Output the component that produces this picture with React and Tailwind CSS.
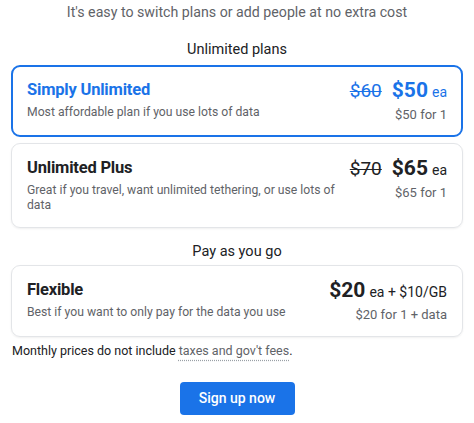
const plans = [
  {
    name: "Simply Unlimited",
    desc: "Most affordable plan if you use lots of data",
    oldPrice: "$60",
    price: "$50",
    unit: "ea",
    note: "$50 for 1",
    selected: true,
  },
  {
    name: "Unlimited Plus",
    desc: "Great if you travel, want unlimited tethering, or use lots of data",
    oldPrice: "$70",
    price: "$65",
    unit: "ea",
    note: "$65 for 1",
  },
];

function PlanCard({ plan }) {
  const selected = plan.selected;
  return (
    <div
      className={
        selected
          ? "rounded-[9px] border-2 border-[#1a73e8] px-[14px] pt-[12px] pb-[13px]"
          : "rounded-[9px] border border-[#e3e5e8] px-[15px] pt-[13px] pb-[14px] shadow-[0_1px_2px_rgba(60,64,67,0.08)]"
      }
    >
      <div className="flex items-start justify-between gap-1">
        <div className="min-w-0">
          <h3
            className={`text-[16.5px] leading-[22px] font-bold tracking-[-0.2px] ${
              selected ? "text-[#1a73e8]" : "text-[#202124]"
            }`}
          >
            {plan.name}
          </h3>
          <p className="mt-[4px] text-[12.2px] leading-[15px] text-[#5f6368]">
            {plan.desc}
          </p>
        </div>
        <div className="shrink-0 text-right">
          <div
            className={`flex items-baseline justify-end ${
              selected ? "text-[#1a73e8]" : "text-[#202124]"
            }`}
          >
            <span className="text-[19px] leading-[22px] line-through decoration-1">
              {plan.oldPrice}
            </span>
            <span className="ml-[10px] text-[21px] leading-[22px] font-bold">
              {plan.price}
            </span>
            <span className="ml-[4px] text-[14px]">{plan.unit}</span>
          </div>
          <p className="mt-[4px] text-[13px] leading-[15px] text-[#5f6368]">
            {plan.note}
          </p>
        </div>
      </div>
    </div>
  );
}

export default function App() {
  return (
    <main
      className="min-h-screen bg-white px-[11px] text-[#202124]"
      style={{ fontFamily: "Roboto, 'Noto Sans', sans-serif" }}
    >
      <p className="pt-[3px] text-center text-[14.2px] leading-[18px] text-[#5f6368]">
        It's easy to switch plans or add people at no extra cost
      </p>

      <h2 className="mt-[20px] text-center text-[14.5px] leading-[18px] text-[#202124]">
        Unlimited plans
      </h2>

      <div className="mt-[6px] space-y-[6px]">
        {plans.map((plan) => (
          <PlanCard key={plan.name} plan={plan} />
        ))}
      </div>

      <h2 className="mt-[15px] text-center text-[14.5px] leading-[18px] text-[#202124]">
        Pay as you go
      </h2>

      <div className="mt-[4px] rounded-[9px] border border-[#e3e5e8] px-[15px] pt-[13px] pb-[14px] shadow-[0_1px_2px_rgba(60,64,67,0.08)]">
        <div className="flex items-start justify-between gap-1">
          <div>
            <h3 className="text-[16.5px] leading-[22px] font-bold tracking-[-0.2px] text-[#202124]">
              Flexible
            </h3>
            <p className="mt-[4px] text-[12.2px] leading-[15px] text-[#5f6368]">
              Best if you want to only pay for the data you use
            </p>
          </div>
          <div className="shrink-0 text-right">
            <div className="flex items-baseline justify-end text-[#202124]">
              <span className="text-[21px] leading-[22px] font-bold">$20</span>
              <span className="ml-[4px] text-[14px]">ea + $10/GB</span>
            </div>
            <p className="mt-[4px] text-[13px] leading-[15px] text-[#5f6368]">
              $20 for 1 + data
            </p>
          </div>
        </div>
      </div>

      <p className="mt-[5px] pl-[1px] text-[12.5px] leading-[18px] text-[#202124]">
        Monthly prices do not include{" "}
        <span className="text-[#5f6368] underline decoration-dotted decoration-[#9aa0a6] underline-offset-[5px]">
          taxes and gov't fees
        </span>
        .
      </p>

      <div className="mt-[22px] flex justify-center">
        <button
          type="button"
          className="h-[33px] w-[115px] rounded-[4px] bg-[#1a73e8] text-[14px] font-medium text-white"
        >
          Sign up now
        </button>
      </div>
    </main>
  );
}
